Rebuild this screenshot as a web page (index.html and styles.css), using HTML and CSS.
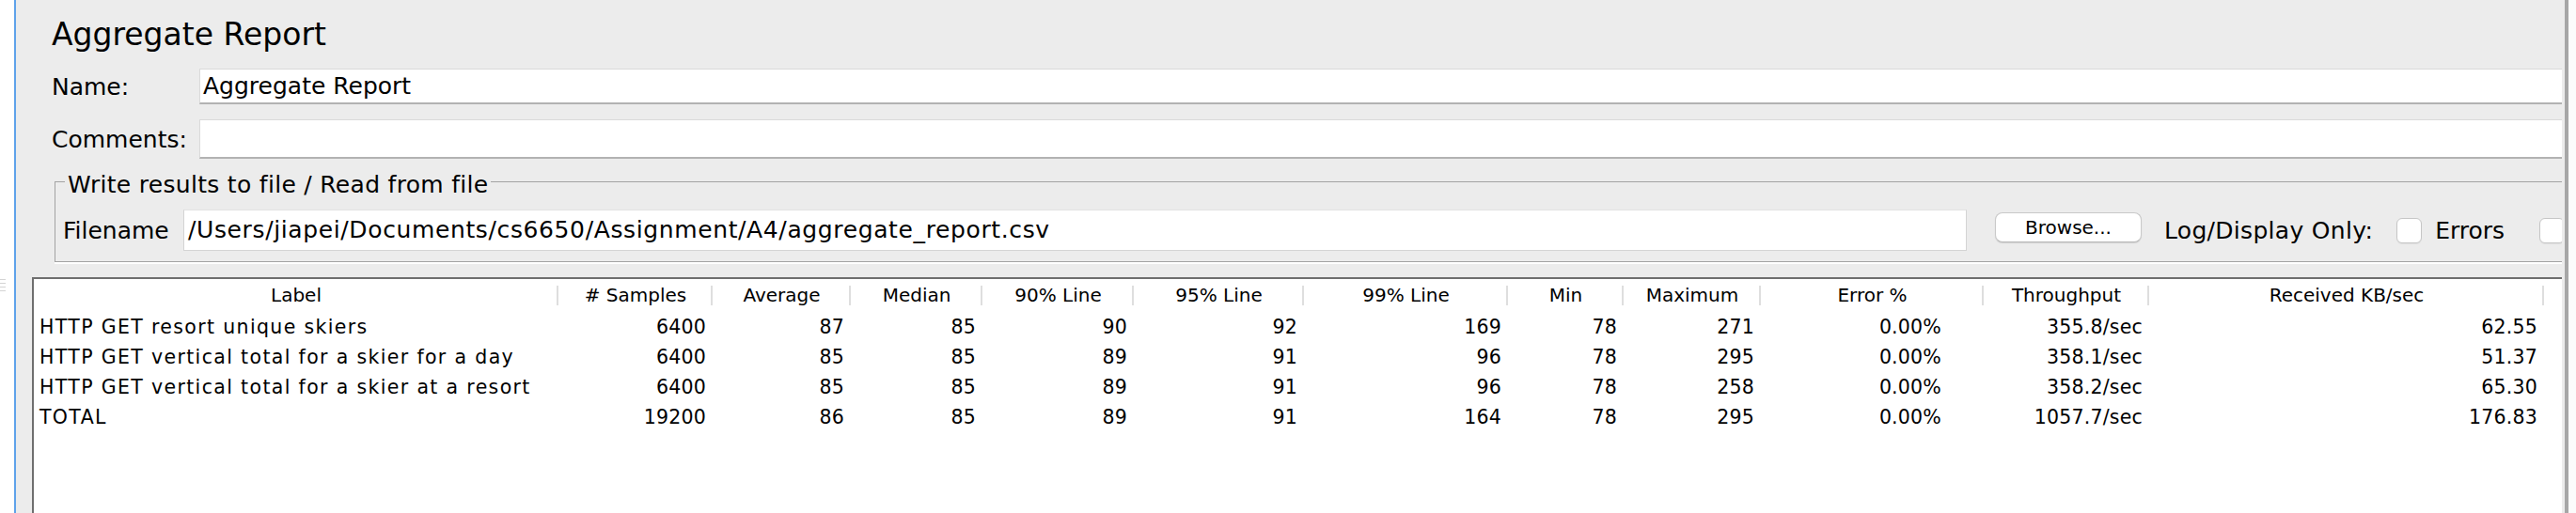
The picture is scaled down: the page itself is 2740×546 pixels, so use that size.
FILE: index.html
```html
<!DOCTYPE html>
<html>
<head>
<meta charset="utf-8">
<title>Aggregate Report</title>
<link rel="stylesheet" href="styles.css">
</head>
<body>
<div class="window">
  <div class="gutter"><div class="grip"></div></div>
  <div class="focus-bar"></div>
  <div class="viewport">
    <div class="panel">
      <h1 class="title">Aggregate Report</h1>
      <div class="field-row name-row">
        <span class="field-label">Name:</span>
        <div class="text-field">Aggregate Report</div>
      </div>
      <div class="field-row comments-row">
        <span class="field-label">Comments:</span>
        <div class="text-field"></div>
      </div>
      <fieldset class="file-box">
        <legend>Write results to file / Read from file</legend>
        <div class="file-row">
          <span class="file-label">Filename</span>
          <div class="file-field">/Users/jiapei/Documents/cs6650/Assignment/A4/aggregate_report.csv</div>
          <span class="btn browse">Browse...</span>
          <span class="log-label">Log/Display Only:</span>
          <span class="checkbox first"></span>
          <span class="check-label">Errors</span>
          <span class="checkbox second"></span>
        </div>
      </fieldset>
      <div class="table">
        <div class="row head">
          <div class="th">Label</div>
          <div class="th"># Samples</div>
          <div class="th">Average</div>
          <div class="th">Median</div>
          <div class="th">90% Line</div>
          <div class="th">95% Line</div>
          <div class="th">99% Line</div>
          <div class="th">Min</div>
          <div class="th">Maximum</div>
          <div class="th">Error %</div>
          <div class="th">Throughput</div>
          <div class="th">Received KB/sec</div>
        </div>
        <div class="row">
          <div class="td lbl">HTTP GET resort unique skiers</div>
          <div class="td">6400</div><div class="td">87</div><div class="td">85</div><div class="td">90</div><div class="td">92</div><div class="td">169</div><div class="td">78</div><div class="td">271</div><div class="td err">0.00%</div><div class="td">355.8/sec</div><div class="td">62.55</div>
        </div>
        <div class="row">
          <div class="td lbl">HTTP GET vertical total for a skier for a day</div>
          <div class="td">6400</div><div class="td">85</div><div class="td">85</div><div class="td">89</div><div class="td">91</div><div class="td">96</div><div class="td">78</div><div class="td">295</div><div class="td err">0.00%</div><div class="td">358.1/sec</div><div class="td">51.37</div>
        </div>
        <div class="row">
          <div class="td lbl">HTTP GET vertical total for a skier at a resort</div>
          <div class="td">6400</div><div class="td">85</div><div class="td">85</div><div class="td">89</div><div class="td">91</div><div class="td">96</div><div class="td">78</div><div class="td">258</div><div class="td err">0.00%</div><div class="td">358.2/sec</div><div class="td">65.30</div>
        </div>
        <div class="row">
          <div class="td lbl">TOTAL</div>
          <div class="td">19200</div><div class="td">86</div><div class="td">85</div><div class="td">89</div><div class="td">91</div><div class="td">164</div><div class="td">78</div><div class="td">295</div><div class="td err">0.00%</div><div class="td">1057.7/sec</div><div class="td">176.83</div>
        </div>
      </div>
    </div>
  </div>
  <div class="edge"></div>
  <div class="vbar"></div>
  <div class="right-strip"></div>
</div>
</body>
</html>
```

FILE: styles.css
```css
html, body {
  margin: 0;
  padding: 0;
  background: #ececec;
}

body {
  font-family: "DejaVu Sans", "Liberation Sans", sans-serif;
  color: #000;
  overflow: hidden;
}

.window {
  display: flex;
  width: 2740px;
  height: 546px;
  overflow: hidden;
}

.gutter {
  width: 15px;
  flex: none;
  background: #ffffff;
}

.grip {
  margin-top: 297px;
  width: 6px;
  height: 13px;
  background: repeating-linear-gradient(#d4d4d4 0 1px, transparent 1px 4px);
}

.focus-bar {
  width: 2px;
  flex: none;
  background: #5fa2ea;
}

.viewport {
  width: 2708px;
  flex: none;
  overflow: hidden;
  background: #ececec;
}

.edge {
  width: 3px;
  flex: none;
  background: #ececec;
}

.vbar {
  width: 4px;
  flex: none;
  background: #a7a7a7;
}

.right-strip {
  width: 8px;
  flex: none;
  background: #fbfbfb;
}

.panel {
  width: 3200px;
}

.title {
  margin: 0 0 0 38px;
  padding-top: 18px;
  font-size: 33px;
  line-height: 38px;
  font-weight: normal;
}

.field-row {
  display: flex;
  align-items: center;
  padding-left: 38px;
  font-size: 25px;
}

.name-row {
  margin-top: 17px;
  height: 38px;
}

.comments-row {
  margin-top: 16px;
  height: 42px;
}

.field-label {
  width: 157px;
  flex: none;
}

.text-field {
  flex: 1;
  align-self: stretch;
  box-sizing: border-box;
  background: #ffffff;
  border-top: 1px solid #dadada;
  border-left: 1px solid #dadada;
  border-bottom: 2px solid #b2b2b2;
  padding-left: 3px;
  display: flex;
  align-items: center;
}

.file-box {
  margin: 9px 0 0 41px;
  padding: 15px 8px 11px 8px;
  border: 1px solid #a3a3a3;
  box-shadow: 0 2px 0 #ffffff;
  width: 2760px;
}

.file-box legend {
  margin-left: 2px;
  padding: 0 3px;
  font-size: 25px;
  line-height: 30px;
  letter-spacing: 0.3px;
  position: relative;
  top: 4px;
}

.file-row {
  display: flex;
  align-items: center;
  height: 44px;
  font-size: 25px;
}

.file-label {
  width: 128px;
  flex: none;
}

.file-field {
  width: 1897px;
  height: 44px;
  flex: none;
  box-sizing: border-box;
  background: #ffffff;
  border: 1px solid #d4d4d4;
  border-top-color: #e2e2e2;
  padding-left: 4px;
  line-height: 42px;
  letter-spacing: 0.62px;
  white-space: nowrap;
}

.btn {
  box-sizing: border-box;
  height: 32px;
  flex: none;
  background: #ffffff;
  border: 1px solid #c9c9c9;
  border-bottom-color: #b9b9b9;
  border-radius: 8px;
  box-shadow: 0 1px 1px rgba(0, 0, 0, 0.12);
  font-size: 20px;
  line-height: 30px;
  text-align: center;
  align-self: flex-start;
  margin-top: 3px;
}

.browse {
  width: 156px;
  margin-left: 30px;
}

.log-label {
  margin-left: 24px;
  letter-spacing: 0.3px;
  white-space: nowrap;
}

.checkbox {
  width: 27px;
  height: 27px;
  flex: none;
  box-sizing: border-box;
  background: #ffffff;
  border: 1px solid #c6c6c6;
  border-radius: 6px;
  box-shadow: 0 1px 1px rgba(0, 0, 0, 0.06);
  margin-top: 1px;
}

.checkbox.first {
  margin-left: 25px;
}

.checkbox.second {
  margin-left: 37px;
}

.check-label {
  margin-left: 14px;
}

.table {
  margin: 16px 0 0 17px;
  width: 3080px;
  height: 320px;
  background: #ffffff;
  border-top: 2px solid #6f6f6f;
  border-left: 2px solid #6f6f6f;
}

.row {
  display: grid;
  grid-template-columns: 558px 164px 147px 140px 161px 181px 217px 123px 146px 237px 176px 420px;
  height: 32px;
  font-size: 20.5px;
  line-height: 32px;
  white-space: nowrap;
}

.row.head {
  height: 35px;
  font-size: 20px;
  line-height: 35px;
}

.th {
  text-align: center;
  background: linear-gradient(#dedede, #dedede) no-repeat right 0 top 7px / 2px 21px;
}

.td {
  text-align: right;
  padding-right: 7px;
  letter-spacing: 0.2px;
}

.td.err {
  padding-right: 45px;
}

.td.lbl {
  text-align: left;
  padding-left: 6px;
  padding-right: 0;
  letter-spacing: 1.35px;
}
```
